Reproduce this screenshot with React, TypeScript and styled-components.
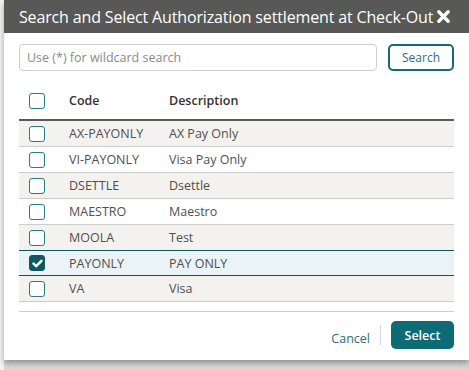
import React, { useState } from "react";
import styled, { createGlobalStyle } from "styled-components";

const GlobalStyle = createGlobalStyle`
  html, body {
    margin: 0;
    padding: 0;
    background: #d8d8d8;
    font-family: "Open Sans", "Noto Sans", sans-serif;
  }
  * { box-sizing: border-box; }
`;

interface Row {
  code: string;
  description: string;
}

const rows: Row[] = [
  { code: "AX-PAYONLY", description: "AX Pay Only" },
  { code: "VI-PAYONLY", description: "Visa Pay Only" },
  { code: "DSETTLE", description: "Dsettle" },
  { code: "MAESTRO", description: "Maestro" },
  { code: "MOOLA", description: "Test" },
  { code: "PAYONLY", description: "PAY ONLY" },
  { code: "VA", description: "Visa" },
];

const App: React.FC = () => {
  const [selected, setSelected] = useState<string[]>(["PAYONLY"]);

  const toggle = (code: string) => {
    setSelected((prev) =>
      prev.includes(code) ? prev.filter((c) => c !== code) : [...prev, code]
    );
  };

  return (
    <Page>
      <GlobalStyle />
      <Dialog>
        <Header>
          <Title>Search and Select Authorization settlement at Check-Out</Title>
          <CloseButton aria-label="Close">
            <svg width="15" height="15" viewBox="0 0 16 16">
              <path
                d="M3 3 L13 13 M13 3 L3 13"
                stroke="#fff"
                strokeWidth="3.6"
                strokeLinecap="round"
              />
            </svg>
          </CloseButton>
        </Header>
        <Body>
          <SearchBar>
            <SearchInput placeholder="Use (*) for wildcard search" />
            <OutlineButton>Search</OutlineButton>
          </SearchBar>
          <Table>
            <HeadRow>
              <CheckCell>
                <Check checked={false} />
              </CheckCell>
              <CodeCell $bold>Code</CodeCell>
              <DescCell $bold>Description</DescCell>
            </HeadRow>
            {rows.map((row, i) => {
              const isSel = selected.includes(row.code);
              return (
                <DataRow
                  key={row.code}
                  $odd={i % 2 === 0}
                  $selected={isSel}
                  onClick={() => toggle(row.code)}
                >
                  <CheckCell>
                    <Check checked={isSel} />
                  </CheckCell>
                  <CodeCell>{row.code}</CodeCell>
                  <DescCell>{row.description}</DescCell>
                </DataRow>
              );
            })}
          </Table>
          <Footer>
            <LinkButton>Cancel</LinkButton>
            <Divider />
            <PrimaryButton>Select</PrimaryButton>
          </Footer>
        </Body>
      </Dialog>
    </Page>
  );
};

const Check: React.FC<{ checked: boolean }> = ({ checked }) => (
  <CheckBox $checked={checked}>
    {checked && (
      <svg width="11" height="9" viewBox="0 0 11 9">
        <path
          d="M1.5 4.6 L4.2 7.2 L9.5 1.8"
          stroke="#fff"
          strokeWidth="2.5"
          fill="none"
          strokeLinecap="round"
          strokeLinejoin="round"
        />
      </svg>
    )}
  </CheckBox>
);

const Page = styled.div`
  width: 469px;
  height: 370px;
  padding: 0 0 10px 4px;
  background: linear-gradient(to right, #f4f4f4 0, #f4f4f4 4px, #d8d8d8 4px);
`;

const Dialog = styled.div`
  width: 465px;
  height: 360px;
  background: #fff;
  display: flex;
  flex-direction: column;
  box-shadow: 0 3px 6px rgba(0, 0, 0, 0.35);
`;

const Header = styled.div`
  height: 33px;
  background: #585856;
  display: flex;
  align-items: center;
  padding: 0 17px 0 15px;
  gap: 3px;
`;

const Title = styled.h1`
  margin: 0;
  font-size: 16px;
  font-weight: 400;
  color: #fff;
  white-space: nowrap;
  letter-spacing: -0.15px;
`;

const CloseButton = styled.button`
  border: none;
  background: transparent;
  padding: 0;
  display: flex;
  align-items: center;
  cursor: pointer;
`;

const Body = styled.div`
  flex: 1;
  padding: 11px 15px 9px 15px;
  display: flex;
  flex-direction: column;
`;

const SearchBar = styled.div`
  display: flex;
  align-items: center;
  gap: 11px;
  height: 27px;
`;

const SearchInput = styled.input`
  flex: 1;
  height: 27px;
  border: 1px solid #cfcfcf;
  border-radius: 4px;
  padding: 0 7px;
  font-family: inherit;
  font-size: 12.5px;
  color: #333;
  outline: none;
  &::placeholder {
    color: #8a8a8a;
  }
`;

const OutlineButton = styled.button`
  width: 66px;
  height: 27px;
  border: 2px solid #176c74;
  border-radius: 5px;
  background: #fff;
  color: #2a6e76;
  font-family: inherit;
  font-size: 12px;
  cursor: pointer;
`;

const Table = styled.div`
  margin-top: 13px;
  display: flex;
  flex-direction: column;
`;

const HeadRow = styled.div`
  display: flex;
  align-items: center;
  height: 37px;
  padding-bottom: 2px;
  border-bottom: 2px solid #5a5a5a;
`;

const DataRow = styled.div<{ $odd: boolean; $selected: boolean }>`
  display: flex;
  align-items: center;
  height: 26px;
  background: ${(p) => (p.$selected ? "#eaf3f6" : p.$odd ? "#f3f2ef" : "#fff")};
  border-bottom: 1px solid ${(p) => (p.$selected ? "#14535c" : "#cdcdcd")};
  margin-top: ${(p) => (p.$selected ? "-1px" : "0")};
  border-top: ${(p) => (p.$selected ? "1px solid #14535c" : "none")};
  cursor: pointer;
`;

const CheckCell = styled.div`
  width: 50px;
  padding-left: 10px;
  display: flex;
  align-items: center;
`;

const CheckBox = styled.span<{ $checked: boolean }>`
  width: 16px;
  height: 16px;
  border-radius: 3px;
  border: 1.5px solid ${(p) => (p.$checked ? "#0f5863" : "#2a7b83")};
  background: ${(p) => (p.$checked ? "#0f5863" : "#fff")};
  display: flex;
  align-items: center;
  justify-content: center;
`;

const CodeCell = styled.div<{ $bold?: boolean }>`
  width: 100px;
  font-size: 12.5px;
  font-weight: ${(p) => (p.$bold ? 600 : 400)};
  color: ${(p) => (p.$bold ? "#333" : "#4f4f4f")};
`;

const DescCell = styled.div<{ $bold?: boolean }>`
  flex: 1;
  font-size: 12.5px;
  font-weight: ${(p) => (p.$bold ? 600 : 400)};
  color: ${(p) => (p.$bold ? "#333" : "#4f4f4f")};
`;

const Footer = styled.div`
  margin-top: 9px;
  border-top: 1px solid #cdcdcd;
  display: flex;
  justify-content: flex-end;
  align-items: center;
  padding-top: 9px;
  gap: 10px;
`;

const LinkButton = styled.button`
  border: none;
  background: transparent;
  color: #2a6e76;
  font-family: inherit;
  font-size: 12.5px;
  padding: 6px 0 0;
  cursor: pointer;
`;

const Divider = styled.span`
  width: 1px;
  height: 20px;
  background: #d4d4d4;
`;

const PrimaryButton = styled.button`
  width: 63px;
  height: 28px;
  border: none;
  border-radius: 5px;
  background: #0d6b75;
  color: #fff;
  font-family: inherit;
  font-size: 12.5px;
  font-weight: 600;
  cursor: pointer;
`;

export default App;
